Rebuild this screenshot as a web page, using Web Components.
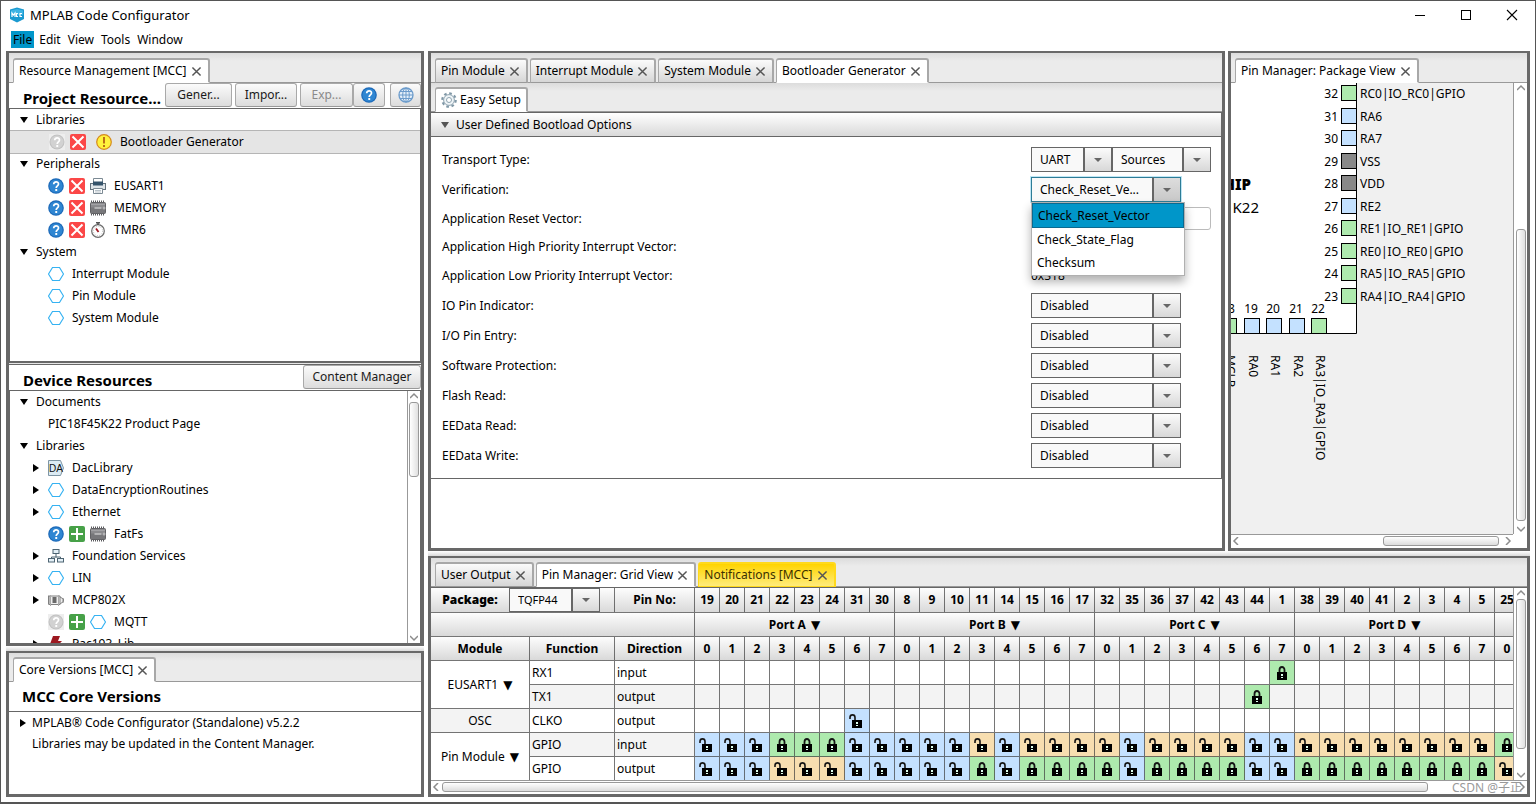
<!DOCTYPE html>
<html lang="en">
<head>
<meta charset="utf-8">
<title>MPLAB Code Configurator</title>
<style>
html,body{height:100%}
body{margin:0;font:12px/18px "Noto Sans","Noto Sans CJK SC",sans-serif;color:#000;background:#fff}
</style>
</head>
<body>
<mcc-window></mcc-window>
<script>
const ICONS={
mcc:'<path d="M1 2.500 8 .5l7 2v9.500L8 15.500l-7-3.500z" fill="#1b9ad0"/><path d="M2 3.500 8 2l6 1.500V8H2z" fill="#3fb4e4"/><path d="M3 10V6l1.500 2L6 6v4M9 6.500H7.500v3H9M13 6.500h-2v3h2" fill="none" stroke="#fff" stroke-width="1.200"/>',
help:'<circle cx="8" cy="8" r="7.800" fill="#1c69b8"/><circle cx="8" cy="8" r="6.600" fill="#2f86d2"/><path d="M5.700 6.200C5.700 3 10.600 3.200 10.500 6c0 1.700-2.300 1.900-2.300 3.900" fill="none" stroke="#fff" stroke-width="1.700"/><rect x="7.300" y="11" width="1.900" height="2" fill="#fff"/>',
helpoff:'<rect width="16" height="16" fill="#eee"/><circle cx="8" cy="8" r="7.500" fill="#c2c2c2"/><circle cx="8" cy="8" r="6.500" fill="#d2d2d2"/><path d="M5.700 6.200C5.700 3 10.600 3.200 10.500 6c0 1.700-2.300 1.900-2.300 3.900" fill="none" stroke="#fff" stroke-width="1.700"/><rect x="7.300" y="11" width="1.900" height="2" fill="#fff"/>',
remove:'<rect width="16" height="16" rx="2" fill="#fb4747"/><path d="M2.500 2.500l11 11M13.500 2.500l-11 11" stroke="#fff" stroke-width="2"/>',
add:'<rect width="16" height="16" rx="2" fill="#47a148"/><path d="M8 2v12M2 8h12" stroke="#fff" stroke-width="2"/>',
warn:'<circle cx="8" cy="8" r="7.300" fill="#fff23c" stroke="#d58a1c" stroke-width="1.200"/><path d="M8 3v6.500M8 11v2" stroke="#b05a12" stroke-width="1.700"/>',
hex:'<path d="M4.500 1.500h7L15.500 8l-4 6.500h-7L.5 8z" fill="#fff" stroke="#35b2f2" stroke-width="1.200"/>',
printer:'<path d="M3.500 5V.5h9V5" fill="#fff" stroke="#7c8a94"/><rect x=".5" y="5.500" width="15" height="6" fill="#dfe5e9" stroke="#63717c"/><rect x="3" y="3.500" width="10" height="4" fill="#34536b"/><path d="M3.500 10.500h9v5h-9z" fill="#fff" stroke="#7c8a94"/><path d="M5 12.500h6M5 14h6" stroke="#b8c2c9"/>',
chip:'<path d="M1 1.500h14M1 14.500h14" stroke="#5b5b5e" stroke-width="2" stroke-dasharray="1 1"/><rect y="2.500" x=".5" width="15" height="11" rx="1" fill="#77777a" stroke="#626265"/><path d="M1 4.500h14" stroke="#a2a2a5" stroke-width="2"/><path d="M1 6.500h14" stroke="#8a8a8d" stroke-width="2"/><path d="M4.500 8h7" stroke="#d8d8d8" stroke-width="1.200"/><circle cx="14" cy="8" r="1.500" fill="#b4b4b6"/>',
timer:'<circle cx="8" cy="9" r="6.300" fill="#fff" stroke="#6b6b6b" stroke-width="1.200"/><circle cx="8" cy="9" r="4.600" fill="none" stroke="#aaa" stroke-width=".8" stroke-dasharray="1 1.400"/><path d="M6 .7h4M8 1v2" stroke="#555" stroke-width="1.600"/><path d="M6 6.500 8.500 10" stroke="#a01822" stroke-width="1.800"/>',
da:'<path d="M.5.5h12l3 7.500-3 7.500H.5z" fill="#dcebf4" stroke="#7e95a4"/><text x="1" y="12" font-family="Liberation Sans,sans-serif" font-size="10" fill="#111">DA</text>',
tree:'<path d="M8 6v3.500M3.500 11V9h9v2" fill="none" stroke="#4d6472"/><rect x="5" y="1.500" width="6" height="4" fill="#e4f0f7" stroke="#4d6472"/><rect x=".5" y="10.500" width="6" height="3.500" fill="#e4f0f7" stroke="#4d6472"/><rect x="9.500" y="10.500" width="6" height="3.500" fill="#e4f0f7" stroke="#4d6472"/>',
motor:'<path d="M.5 3.500v9M1 4h11v8.500H1zM12 5l3.500 2v2.500L12 12" fill="#eee" stroke="#808080"/><path d="M2.500 3v11M10.500 3v11" stroke="#aaa"/><rect x="4.500" y="5" width="4" height="6" fill="#6a6a6a"/><path d="M15 6v5" stroke="#888"/>',
bolt:'<path d="M5 0h7l-2 5h4L4 16l2-8H2z" fill="#9c1820"/>',
globe:'<circle cx="8" cy="8" r="7" fill="#e3eef9" stroke="#6b9bcb" stroke-width="1.300"/><ellipse cx="8" cy="8" rx="3.300" ry="7" fill="none" stroke="#6b9bcb"/><path d="M8 1v14M1 8h14M2 4.500h12M2 11.500h12" stroke="#6b9bcb"/>',
gear:'<circle cx="8" cy="8" r="6.700" fill="none" stroke="#7f97a6" stroke-width="2.200" stroke-dasharray="2.630"/><circle cx="8" cy="8" r="5.400" fill="#eef4f7" stroke="#8fa4b1"/><circle cx="8" cy="8" r="2.500" fill="#fff" stroke="#8fa4b1"/>',
close:'<path d="M3 3l10 10M13 3 3 13" stroke="#555" stroke-width="1.800"/>',
min:'<path d="M3 8.500h10" stroke="#000"/>',
max:'<rect x="3.500" y="3.500" width="9" height="9" fill="none" stroke="#000"/>',
x:'<path d="M3 3l10 10M13 3 3 13" stroke="#000" stroke-width="1.100"/>',
locked:'<path d="M5.500 8V5a2.500 3 0 0 1 5 0V8" fill="none" stroke="#151515" stroke-width="1.800"/><path d="M3 7h10v8H3z"/><path d="M7 9h2v2H7zM7 12h2v1H7z" fill="#dfe"/>',
unlocked:'<path d="M1 6V4.500C1 1 6 1 6 4.500V7" fill="none" stroke="#151515" stroke-width="1.600"/><path d="M3 7h10v8H3z"/><path d="M7 9h2v2H7zM7 12h2v1H7z" fill="#dfe"/>'
};
function define(name,css,render){
  customElements.define(name,class extends HTMLElement{
    constructor(){super();this.attachShadow({mode:'open'})}
    connectedCallback(){
      if(this.shadowRoot.firstChild)return;
      const t=document.createElement('template');
      t.innerHTML=`<style>*{box-sizing:border-box}${css}</style>${render(this)}`;
      this.shadowRoot.append(t.content.cloneNode(true));
    }
  });
}
define('mcc-icon',`:host{display:inline-block;width:16px;height:16px;flex:none}svg{display:block;width:100%;height:100%}`,
 e=>`<svg viewBox="0 0 16 16" aria-hidden="true">${ICONS[e.getAttribute('name')]}</svg>`);

define('mcc-button',`:host{display:block;flex:none}
button{width:100%;height:24px;padding:0;font:inherit;color:#1a1a1a;border:1px solid #a9a9a9;border-bottom-color:#999;border-radius:3px;background:linear-gradient(#fbfbfb,#dcdcdc);display:flex;align-items:center;justify-content:center}
button:disabled{color:#8a8a8a}`,
 e=>`<button ${e.hasAttribute('disabled')?'disabled':''} aria-label="${e.getAttribute('label')||e.textContent}"><slot></slot></button>`);

define('mcc-tab',`:host{display:block;flex:none}
button{width:100%;height:25px;padding:0 5px;font:inherit;color:inherit;border:1px solid #a8a8a8;border-width:2px 2px 1px 1px;border-bottom-color:#999;border-radius:3px 3px 0 0;background:linear-gradient(#fbfbfb,#d6d6d6);display:flex;align-items:center;gap:3px;white-space:nowrap}
:host([selected]) button{background:#fff;border-bottom-color:#fff}
:host([alert]) button{background:linear-gradient(#ffd400,#ffec7c);border-color:#ffd91c;color:#3c3000}
.x{width:13px;height:13px}`,
 e=>`<button role="tab"><slot></slot>${e.hasAttribute('fixed')?'':'<mcc-icon class="x" name="close"></mcc-icon>'}</button>`);

define('mcc-tabs',`:host{display:flex;align-items:flex-end;gap:2px;height:30px;flex:none;padding:0 4px;background:linear-gradient(#dcdcdc,#ebebeb 8px,#ebebeb);border-bottom:1px solid #999}
::slotted(mcc-tab){margin-bottom:-1px}`,()=>`<slot></slot>`);

define('mcc-combo',`:host{display:inline-grid;height:25px;grid-template:100%/100%}
select,i{grid-area:1/1}
select{appearance:none;font:inherit;color:#000;width:100%;height:100%;padding:0 28px 0 8px;margin:0;border:1px solid #666;border-radius:0;background:#f9f9f9;outline:0}
i{justify-self:end;width:29px;border:1px solid #666;border-left-width:2px;background:linear-gradient(#fbfbfb,#d8d8d8);pointer-events:none;display:flex;align-items:center;justify-content:center}
i:after{content:"";border:4px solid transparent;border-top-color:#666;border-bottom:0}
:host([open]) select{border-color:#2d7c96;box-shadow:0 0 0 1px #bfe6f5}
:host([open]) i{background:linear-gradient(#ddd,#c8c8c8);border-color:#2d7c96;border-left-color:#666}`,
 e=>`<select aria-label="${e.getAttribute('label')}"><option>${e.getAttribute('value')}</option></select><i></i>`);

define('mcc-scroll',`:host{display:flex;flex:none;align-items:center;background:#fff;gap:1px}
:host([dir=v]){flex-direction:column;width:13px;padding:1px 0;border-left:1px solid #999}
:host([dir=h]){height:13px;padding:0 1px;border-top:1px solid #999}
.t{border:1px solid #999;border-radius:3px}
:host([dir=v]) .t{width:10px;background:linear-gradient(90deg,#fff,#e0e0e0)}
:host([dir=h]) .t{height:10px;background:linear-gradient(#fff,#dcdcdc)}
svg{width:8px;height:8px;flex:none;display:block}
path{fill:none;stroke:#8c8c8c;stroke-width:1.500}`,
 e=>{const [a,b,c]=e.getAttribute('parts').split(' '),v=e.getAttribute('dir')=='v';
 return `<svg viewBox="0 0 8 8"><path d="${v?'M0 6l4-4 4 4':'M6 0 2 4l4 4'}"/></svg><div style="flex:${a} 1 0"></div><div class="t" style="flex:${b} 1 0"></div><div style="flex:${c} 1 0"></div><svg viewBox="0 0 8 8"><path d="${v?'M0 2l4 4 4-4':'M2 0l4 4-4 4'}"/></svg>`});

define('mcc-row',`:host{display:flex;align-items:center;height:22px;flex:none;white-space:nowrap}
.a{width:10px;margin-left:10px;flex:none;display:flex}
:host([level="1"]) .a{margin-left:23px;width:9px}
:host([level="0"]) .a{margin-left:11px;width:8px}
.a:before{content:"";display:none;border:4px solid transparent}
:host([arrow=down]) .a:before{display:block;border-top:6px solid #000;border-bottom:0}
:host([arrow=right]) .a:before{display:block;border-left:6px solid #000;border-right:0}
.i{display:flex;gap:5px;margin-left:6px}
:host([level="0"]) .i{margin-left:4px}
:host([icons]) .i{margin-right:8px}
:host([selected]){background:#e5e5e5;box-shadow:0 0 0 1px #b5b5b5}
:host([selected]) .i{margin-left:7px}
:host([selected]) .i mcc-icon:last-child{margin-left:5px}`,
 e=>`<span class="a"></span><span class="i">${(e.getAttribute('icons')||'').split(' ').filter(Boolean).map(n=>`<mcc-icon name="${n}"></mcc-icon>`).join('')}</span><span><slot></slot></span>`);

define('mcc-panel',`:host{display:flex;flex-direction:column;min-width:0;min-height:0;border:solid #686868;border-width:2px 3px 3px 3px;background:#fff;overflow:hidden}`,()=>`<slot></slot>`);

define('mcc-split',`:host{display:block;flex:none;height:4px;border:solid #686868;border-width:2px 0 1px;background:linear-gradient(#f4f4f4,#d9d9d9)}`,()=>'');

define('mcc-resources',`:host{display:flex;flex-direction:column;flex:1;min-height:0}
.head{display:flex;height:26px;flex:none;gap:3px;border-bottom:1px solid #666;align-items:flex-start}
h2{margin:0;flex:1;padding:5px 0 0 14px;font:bold 15px/20px "Noto Sans",sans-serif;white-space:nowrap}
.tree{display:flex;flex-direction:column;overflow:hidden;border:solid #686868;border-width:0 1px;min-height:0}
.p{flex:249 1 0}.d{flex:250 1 0;flex-direction:row}
.list{flex:1;overflow:hidden;display:flex;flex-direction:column}
.g{width:67px}.m{width:62px}.e{width:53px;margin-right:-3px}.q{width:32px;margin-right:2px}.w{width:31px}.c{width:118px}`,
()=>`<div class="head"><h2>Project Resource...</h2><mcc-button class="g">Gener...</mcc-button><mcc-button class="m">Impor...</mcc-button><mcc-button class="e" disabled>Exp...</mcc-button><mcc-button class="q" label="Help"><mcc-icon name="help"></mcc-icon></mcc-button><mcc-button class="w" label="Web"><mcc-icon name="globe"></mcc-icon></mcc-button></div>
<div class="tree p"><mcc-row arrow="down">Libraries</mcc-row>
<mcc-row level="1" selected icons="helpoff remove warn">Bootloader Generator</mcc-row>
<mcc-row arrow="down">Peripherals</mcc-row>
<mcc-row level="1" icons="help remove printer">EUSART1</mcc-row>
<mcc-row level="1" icons="help remove chip">MEMORY</mcc-row>
<mcc-row level="1" icons="help remove timer">TMR6</mcc-row>
<mcc-row arrow="down">System</mcc-row>
<mcc-row level="1" icons="hex">Interrupt Module</mcc-row>
<mcc-row level="1" icons="hex">Pin Module</mcc-row>
<mcc-row level="1" icons="hex">System Module</mcc-row></div>
<mcc-split></mcc-split>
<div class="head"><h2>Device Resources</h2><mcc-button class="c">Content Manager</mcc-button></div>
<div class="tree d"><div class="list"><mcc-row arrow="down">Documents</mcc-row>
<mcc-row level="1">PIC18F45K22 Product Page</mcc-row>
<mcc-row arrow="down">Libraries</mcc-row>
<mcc-row level="1" arrow="right" icons="da">DacLibrary</mcc-row>
<mcc-row level="1" arrow="right" icons="hex">DataEncryptionRoutines</mcc-row>
<mcc-row level="1" arrow="right" icons="hex">Ethernet</mcc-row>
<mcc-row level="1" icons="help add chip">FatFs</mcc-row>
<mcc-row level="1" arrow="right" icons="tree">Foundation Services</mcc-row>
<mcc-row level="1" arrow="right" icons="hex">LIN</mcc-row>
<mcc-row level="1" arrow="right" icons="motor">MCP802X</mcc-row>
<mcc-row level="1" icons="helpoff add hex">MQTT</mcc-row>
<mcc-row level="1" arrow="right" icons="bolt">Pac193_Lib</mcc-row></div><mcc-scroll dir="v" parts="0 73 155"></mcc-scroll></div>`);

define('mcc-versions',`:host{display:block;flex:1}
h2{margin:0;padding:4px 13px 5px;height:30px;font:bold 15px/20px "Noto Sans",sans-serif;border-bottom:1px solid #666}
p{margin:0;padding-left:23px;line-height:20px}`,
()=>`<h2>MCC Core Versions</h2><mcc-row arrow="right" level="0">MPLAB® Code Configurator (Standalone) v5.2.2</mcc-row><p>Libraries may be updated in the Content Manager.</p>`);

define('mcc-form',`:host{display:block;border-right:1px solid #686868}
header{display:flex;align-items:center;gap:7px;height:25px;padding-left:10px;border-top:1px solid #666;border-bottom:1px solid #666;background:linear-gradient(#fff,#d9d9d9)}
header:before{content:"";border:4px solid transparent;border-top:6px solid #555;border-bottom:0}
.rows{display:grid;gap:5px;padding:10px 10px 10px 11px;border-bottom:1px solid #666}
.r{display:flex;justify-content:space-between;align-items:center;height:25px}
.r>div{width:180px;display:flex;position:relative;flex:none}
.t{height:24px}.i{height:23px}
.s{width:150px}.u{width:81px}.v{width:99px}
input{width:100%;height:23px;border:1px solid #bbb;border-radius:3px;padding:0 8px;font:inherit;outline:0}
ul{position:absolute;z-index:2;left:0;top:25px;width:154px;margin:0;padding:0 0 1px;list-style:none;background:#fff;border:1px solid #b0b0b0;box-shadow:0 6px 9px rgba(0,0,0,.3)}
li{line-height:23px;padding-left:5px}
li[aria-selected]{background:#0096c9;border:1px solid #0a6a90}`,
()=>{const row=(l,c)=>`<div class="r"><span>${l}</span><div>${c}</div></div>`;
const cb=(l,v,c='s',x='')=>`<mcc-combo class="${c}" label="${l}" value="${v}" ${x}></mcc-combo>`;
return `<header>User Defined Bootload Options</header><div class="rows">
${row('Transport Type:',cb('Transport type','UART','u')+cb('Transport source','Sources','v'))}
${row('Verification:',cb('Verification','Check_Reset_Ve...','s','open')+'<ul role="listbox" aria-label="Verification"><li role="option" aria-selected="true">Check_Reset_Vector</li><li role="option">Check_State_Flag</li><li role="option">Checksum</li></ul>')}
<div class="r i"><label for="arv">Application Reset Vector:</label><div><input id="arv"></div></div>
<div class="r t"><span>Application High Priority Interrupt Vector:</span><div></div></div>
<div class="r t"><span>Application Low Priority Interrupt Vector:</span><div>0x318</div></div>
${['IO Pin Indicator:','I/O Pin Entry:','Software Protection:','Flash Read:','EEData Read:','EEData Write:'].map(l=>row(l,cb(l,'Disabled'))).join('')}</div>`});

define('mcc-package',`:host{display:grid;grid-template:1fr 14px/1fr 14px;flex:1;min-height:0;background:#fff}
.c{background:#f0f0f0;overflow:hidden;min-width:0;min-height:0}
svg{display:block;width:100%;height:100%}
text{font-family:"Noto Sans",sans-serif;font-size:12px}
mcc-scroll{width:auto}`,
()=>{const G='#aeeaae',B='#c4e1ff',D='#888';
const right=[[32,'RC0|IO_RC0|GPIO',G],[31,'RA6',B],[30,'RA7',B],[29,'VSS',D],[28,'VDD',D],[27,'RE2',B],[26,'RE1|IO_RE1|GPIO',G],[25,'RE0|IO_RE0|GPIO',G],[24,'RA5|IO_RA5|GPIO',G],[23,'RA4|IO_RA4|GPIO',G]];
const low=[[18,'MCLR',G],[19,'RA0',B],[20,'RA1',B],[21,'RA2',B],[22,'RA3|IO_RA3|GPIO',G]];
let s='<path d="M0 0h125v250H0z" fill="#fff"/><path d="M125.500 0v250.500H0" fill="none" stroke="#000"/>';
right.forEach(([n,t,c],i)=>{const y=Math.round(3+i*22.5);s+=`<rect x="110.500" y="${y-.5}" width="15" height="15" fill="${c}" stroke="#000"/><text x="107" y="${y+12}" text-anchor="end">${n}</text><text x="129" y="${y+12}">${t}</text>`});
low.forEach(([n,t,c],i)=>{const x=Math.round(-10+i*22.5);s+=`<rect x="${x+.5}" y="235.500" width="15" height="15" fill="${c}" stroke="#000"/><text x="${x+7}" y="230" text-anchor="middle">${n}</text><text transform="translate(${x+5} 272) rotate(90)">${t}</text>`});
s+='<text x="20" y="107" text-anchor="end" style="font-size:15px;font-weight:900">HIP</text><text x="28" y="130" text-anchor="end" style="font-size:15px">K22</text>';
return `<div class="c"><svg role="img" aria-label="Package view">${s}</svg></div><mcc-scroll dir="v" parts="136 293 2"></mcc-scroll><mcc-scroll dir="h" parts="145 117 3"></mcc-scroll>`});

define('mcc-grid',`:host{display:grid;grid-template:1fr 14px/1fr 14px;flex:1;min-height:0;border-top:1px solid #666}
.c{overflow:hidden;min-width:0;min-height:0}
.c+mcc-scroll{width:auto}
mcc-scroll[dir=h]{grid-column:1/3}
table{table-layout:fixed;width:0;border-collapse:separate;border-spacing:0}
col.m{width:99px}col.f{width:85px}col.d{width:80px}col.p{width:25px}
th,td{height:24px;padding:0;border:solid rgba(60,60,60,.7);border-width:0 1px 1px 0;white-space:nowrap;overflow:hidden;line-height:18px}
thead tr:first-child th{height:25px}
th{font-weight:bold;font-size:12px;text-align:center;background:linear-gradient(#fdfdfd,#d9d9d9)}
td{padding-left:2px}tbody th{font-weight:normal;background:#fff}
tbody tr:nth-child(even) td,th.alt{background:#f3f3f3}
td.b,td.g,td.o{padding:0;text-align:center}
tbody tr td.b{background:#c4e1ff}tbody tr td.g{background:#aeeaae}tbody tr td.o{background:#f7deb0}
mcc-icon{display:block;margin:0 auto}
.pk{display:flex;align-items:center;height:24px}
.pk b{width:78px;text-align:center}.pk mcc-combo{width:91px;font-weight:normal;font-size:11px;height:24px}
small{font:12px/18px "DejaVu Sans",sans-serif;margin-left:2px}`,
()=>{const pins=[19,20,21,22,23,24,31,30,8,9,10,11,14,15,16,17,32,35,36,37,42,43,44,1,38,39,40,41,2,3,4,5,25];
const cells=s=>[...s].map(c=>{if(c=='.')return '<td></td>';const k={b:['b','unlocked'],g:['g','locked'],o:['o','unlocked']}[c];return `<td class="${k[0]}"><mcc-icon name="${k[1]}"></mcc-icon></td>`}).join('');
const at=(i,c)=>'.'.repeat(i)+c+'.'.repeat(32-i);
return `<div class="c"><table><colgroup><col class="m"><col class="f"><col class="d">${'<col class="p">'.repeat(33)}</colgroup>
<thead><tr><th colspan="2"><div class="pk"><b>Package:</b><mcc-combo label="Package" value="TQFP44"></mcc-combo></div></th><th>Pin No:</th>${pins.map(p=>`<th>${p}</th>`).join('')}</tr>
<tr><th colspan="3"></th>${['A','B','C','D'].map(p=>`<th colspan="8">Port ${p} <small>▼</small></th>`).join('')}<th></th></tr>
<tr><th>Module</th><th>Function</th><th>Direction</th>${pins.map((p,i)=>`<th>${i%8}</th>`).join('')}</tr></thead>
<tbody><tr><th rowspan="2">EUSART1 <small>▼</small></th><td>RX1</td><td>input</td>${cells(at(23,'g'))}</tr>
<tr><td>TX1</td><td>output</td>${cells(at(22,'g'))}</tr>
<tr><th class="alt">OSC</th><td>CLKO</td><td>output</td>${cells(at(6,'b'))}</tr>
<tr><th rowspan="2">Pin Module <small>▼</small></th><td>GPIO</td><td>input</td>${cells('bbbgggbb'+'bbbobooo'+'oboooobb'+'oooooooo'+'g')}</tr>
<tr><td>GPIO</td><td>output</td>${cells('bbbooobb'+'bbbgbggg'+'gbggggbb'+'gggggggg'+'o')}</tr></tbody></table></div>
<mcc-scroll dir="v" parts="0 152 20"></mcc-scroll><mcc-scroll dir="h" parts="0 987 88"></mcc-scroll>`});

define('mcc-window',`:host{display:flex;flex-direction:column;height:100vh;min-height:600px;border:1px solid #555;border-width:1px 1px 2px;background:#fff;position:relative;overflow:hidden;box-sizing:border-box}
.title{display:flex;align-items:center;height:28px;padding-left:8px;gap:5px;flex:none}
.title h1{font:inherit;font-size:13px;margin:0;flex:1}
.ctl{display:flex}.ctl button{width:46px;height:28px;border:0;background:none;padding:0;display:grid;place-items:center}
nav{display:flex;height:22px;flex:none;padding:2px 0 3px 10px;line-height:17px;gap:3px}
nav a{color:#000;text-decoration:none;padding:0 2px}
nav a:first-child{background:#0096c9}
main{flex:1;min-height:0;display:grid;grid-template-columns:418px minmax(0,1fr);gap:4px;padding:0 5px 5px}
.left,.right{display:flex;flex-direction:column;min-height:0}
.res{flex:590 1 0}.ver{flex:141 1 0}
.gap{height:5px;flex:none;background:linear-gradient(#fff,#d9d9d9)}
.top{flex:500 1 0;display:grid;grid-template-columns:minmax(0,1fr) 302px;gap:3px;min-height:0}
.bot{flex:236 1 0}
.in{height:29px}
.mark{position:absolute;right:13px;bottom:5px;font-size:12px;color:#999}`,
()=>`<div class="title"><mcc-icon name="mcc"></mcc-icon><h1>MPLAB Code Configurator</h1><div class="ctl"><button aria-label="Minimize"><mcc-icon name="min"></mcc-icon></button><button aria-label="Maximize"><mcc-icon name="max"></mcc-icon></button><button aria-label="Close"><mcc-icon name="x"></mcc-icon></button></div></div>
<nav><a href="#">File</a><a href="#">Edit</a><a href="#">View</a><a href="#">Tools</a><a href="#">Window</a></nav>
<main><div class="left"><mcc-panel class="res"><mcc-tabs><mcc-tab selected>Resource Management [MCC]</mcc-tab></mcc-tabs><mcc-resources></mcc-resources></mcc-panel><div class="gap"></div>
<mcc-panel class="ver"><mcc-tabs class="in"><mcc-tab selected>Core Versions [MCC]</mcc-tab></mcc-tabs><mcc-versions></mcc-versions></mcc-panel></div>
<div class="right"><div class="top"><mcc-panel><mcc-tabs><mcc-tab>Pin Module</mcc-tab><mcc-tab>Interrupt Module</mcc-tab><mcc-tab>System Module</mcc-tab><mcc-tab selected>Bootloader Generator</mcc-tab></mcc-tabs><mcc-tabs class="in"><mcc-tab selected fixed><mcc-icon name="gear"></mcc-icon>Easy Setup</mcc-tab></mcc-tabs><mcc-form></mcc-form></mcc-panel>
<mcc-panel><mcc-tabs><mcc-tab selected>Pin Manager: Package View</mcc-tab></mcc-tabs><mcc-package></mcc-package></mcc-panel></div><div class="gap"></div>
<mcc-panel class="bot"><mcc-tabs class="in"><mcc-tab>User Output</mcc-tab><mcc-tab selected>Pin Manager: Grid View</mcc-tab><mcc-tab alert>Notifications [MCC]</mcc-tab></mcc-tabs><mcc-grid></mcc-grid></mcc-panel></div></main>
<div class="mark">CSDN @子正</div>`);
</script>
</body>
</html>
